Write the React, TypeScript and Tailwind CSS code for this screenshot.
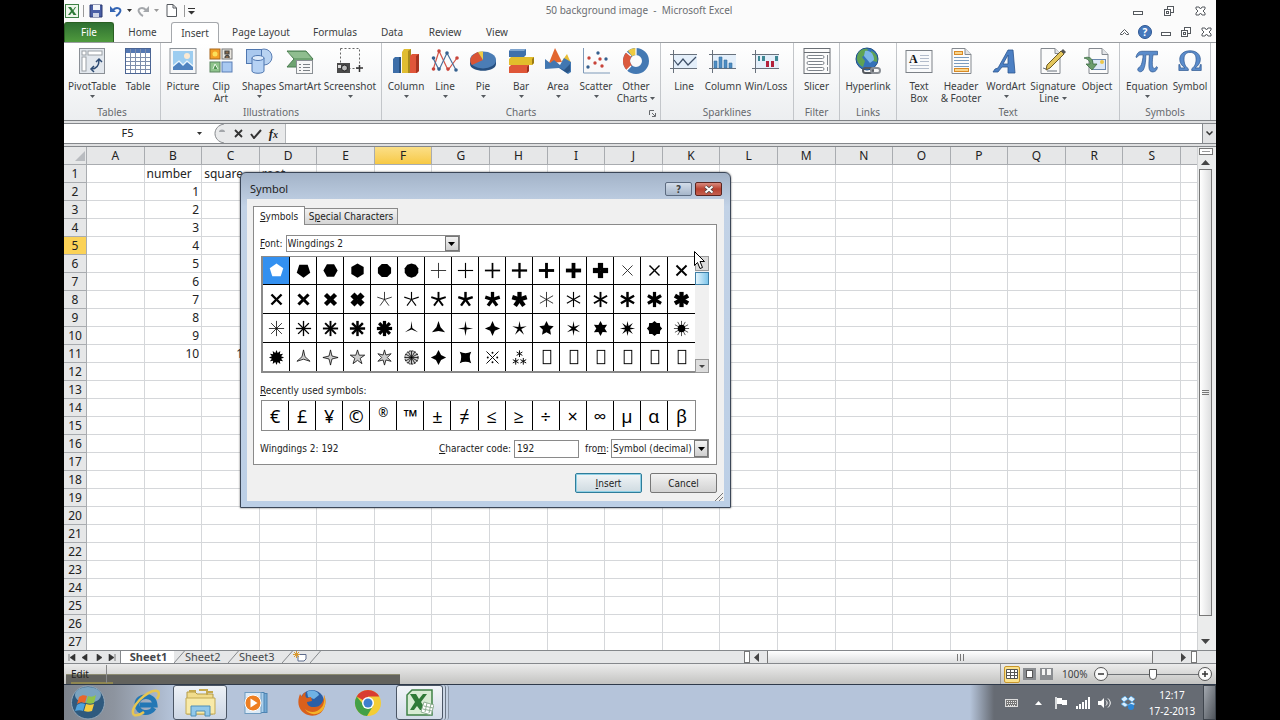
import React from 'react';

const uiFont = "font-['Noto_Sans','Open_Sans',sans-serif]";
const dialogFont = "font-['DejaVu_Sans_Condensed','Noto_Sans',sans-serif]";

/* ---------- ribbon icons, all on a 28x28 box ---------- */

const icons: Record<string, React.ReactNode> = {
  pivot: (
    <>
      <rect x="1.5" y="1.5" width="25" height="25" fill="#e3e8ee" stroke="#8b9096" />
      <rect x="4" y="4" width="4" height="4" fill="#fff" stroke="#9a9fa5" />
      <rect x="10" y="4" width="14" height="4" fill="#fff" stroke="#9a9fa5" />
      <rect x="4" y="10" width="4" height="14" fill="#fff" stroke="#9a9fa5" />
      <path d="M13 22c5 0 8-3 8-9M18 15l3-3 3 3M16 19l-3 3 3 3" fill="none" stroke="#2d4a73" strokeWidth="1.5" />
    </>
  ),
  table: (
    <>
      <rect x="1.5" y="1.5" width="25" height="25" fill="#fff" stroke="#4b6594" />
      <rect x="2" y="2" width="24" height="4" fill="#5478b4" />
      <path d="M2 10.500h24M2 14.500h24M2 18.500h24M2 22.500h24M6.500 2v24M11.500 2v24M16.500 2v24M21.500 2v24" stroke="#7e8eac" />
    </>
  ),
  picture: (
    <>
      <rect x="1" y="1.500" width="26" height="25" fill="#f6f7f8" stroke="#8b9198" />
      <rect x="4" y="4" width="20" height="19" fill="#9dcdf0" />
      <circle cx="18" cy="9" r="3" fill="#fbe9d2" />
      <path d="M4 20l6-5 4 4 4-4 6 5v3H4z" fill="#4f83c0" />
      <path d="M4 19l6-5 4 4 4-4 6 5" fill="none" stroke="#e9f4fc" strokeWidth="1.200" />
    </>
  ),
  clip: (
    <>
      <rect x="3" y="2" width="10" height="10" fill="#f3a026" stroke="#a5661e" />
      <circle cx="8" cy="7" r="2.500" fill="#fce05a" />
      <rect x="15" y="2" width="10" height="10" fill="#e9e6df" stroke="#777" />
      <path d="M18 11c0-4 5-3 4 0M18 4h4v3h-4z" stroke="#444" strokeWidth="1.200" fill="#8b6a4a" />
      <rect x="3" y="15" width="10" height="10" fill="#8fc48c" stroke="#5b8560" />
      <path d="M6 22l2-5 3 5" stroke="#e8f6e6" fill="#4d9351" />
      <rect x="15" y="15" width="10" height="10" fill="#a9c9f1" stroke="#5a7fb6" />
    </>
  ),
  shapes: (
    <>
      <circle cx="19" cy="10" r="8" fill="#b9d3f1" stroke="#5b7fb5" />
      <rect x="1.500" y="2.500" width="15" height="14" fill="#a9c8ee" stroke="#4f77b0" />
      <path d="M7 11v13c0 3 12 3 12 0V11z" fill="#b6d2f4" stroke="#4f77b0" />
      <ellipse cx="13" cy="11" rx="6" ry="2.500" fill="#deebfa" stroke="#4f77b0" />
    </>
  ),
  smartart: (
    <>
      <path d="M1 4h19l7 8-7 8H1l7-8z" fill="#6fa372" stroke="#4a7d50" />
      <path d="M2 5h18l5 6H8z" fill="#8fbd8f" />
      <rect x="10.500" y="13.500" width="16" height="13" fill="#f7f7f7" stroke="#8a8f94" />
      <path d="M13 17.500h2M17 17.500h7M13 20.500h2M17 20.500h7M13 23.500h2M17 23.500h7" stroke="#7c8186" />
    </>
  ),
  screenshot: (
    <>
      <rect x="4.500" y="1.500" width="19" height="20" fill="none" stroke="#666" strokeDasharray="2 2" />
      <rect x="1" y="16" width="13" height="10" fill="#4a4a4a" />
      <rect x="2" y="18" width="3" height="3" fill="#ddd" />
      <circle cx="8.500" cy="21" r="3" fill="#bbb" stroke="#222" />
      <path d="M20 21h7M23.500 18v7" stroke="#333" strokeWidth="1.500" />
    </>
  ),
  column: (
    <>
      <path d="M1 12l2-2h6v16H1z" fill="#3d6ea8" />
      <path d="M7 10l2 0v16H7z" fill="#27507f" />
      <path d="M10 5l2-3h7v24h-9z" fill="#e0bd31" />
      <path d="M16 4l3-2v24h-3z" fill="#a98a1c" />
      <path d="M18 9l2-2h7v17l-2 2h-7z" fill="#e0563a" />
      <path d="M24 9l3-2v17l-3 2z" fill="#a63420" />
    </>
  ),
  line: (
    <>
      <path d="M2 23l6-19 9 19 9-12" fill="none" stroke="#d4574a" strokeWidth="1.200" />
      <path d="M2 11l6 12 8-17 9 17" fill="none" stroke="#48709c" strokeWidth="1.200" />
      <g fill="#c8443a"><circle cx="2.500" cy="22" r="1.800" /><circle cx="8" cy="4" r="1.800" /><circle cx="17" cy="22" r="1.800" /><circle cx="26" cy="11" r="1.800" /></g>
      <g fill="#35608f"><circle cx="2.500" cy="11" r="1.800" /><circle cx="8" cy="22" r="1.800" /><circle cx="16" cy="6" r="1.800" /><circle cx="25" cy="23" r="1.800" /></g>
    </>
  ),
  pie: (
    <>
      <path d="M1 13v4c0 9 26 9 26 0v-4z" fill="#264f7f" />
      <ellipse cx="14" cy="13" rx="13" ry="8.500" fill="#4b7db5" />
      <path d="M14 13L3 18c-4-5-1-10 6-13z" fill="#d95435" />
      <path d="M14 13L9 5c2-.6 3-.6 5-.6z" fill="#efcb45" />
    </>
  ),
  bar: (
    <>
      <path d="M2 4l2-2h15v6l-2 2H2z" fill="#3f70aa" />
      <path d="M2 4l2-2h15l-2 2z" fill="#7ea5d0" />
      <path d="M2 12l2-2h23v6l-2 2H2z" fill="#e2bd2c" />
      <path d="M25 12l2-2v6l-2 2z" fill="#9c7c13" />
      <path d="M2 20l2-2h18v6l-2 2H2z" fill="#df5638" />
      <path d="M20 20l2-2v6l-2 2z" fill="#9e311f" />
    </>
  ),
  area: (
    <>
      <path d="M5 16l6-15 7 14z" fill="#e2662f" />
      <path d="M18 14l5-7 4 9z" fill="#e9bd35" />
      <path d="M1 12l5 4 4-3 6 5 4-7 7 4v10l-3 2-9-6-14 1z" fill="#4277b1" />
      <path d="M14 20l6 3 6-6v7l-3 2z" fill="#2a5587" />
    </>
  ),
  scatter: (
    <>
      <path d="M1.500 1v25H28" fill="none" stroke="#7f9ab9" />
      <g fill="#c8443a"><circle cx="7" cy="11" r="1.700" /><circle cx="13" cy="16" r="1.700" /><circle cx="18" cy="12" r="1.700" /><circle cx="20" cy="19" r="1.700" /></g>
      <g fill="#35608f"><circle cx="6" cy="20" r="1.700" /><circle cx="16" cy="6" r="1.700" /><circle cx="24" cy="12" r="1.700" /></g>
    </>
  ),
  other: (
    <>
      <circle cx="14" cy="14" r="9.500" fill="none" stroke="#4479b3" strokeWidth="7" />
      <path d="M7.300 20.700A9.500 9.500 0 0 1 7 7.500" fill="none" stroke="#dc5a3d" strokeWidth="7" />
      <path d="M8 6.500A9.500 9.500 0 0 1 14 4.500" fill="none" stroke="#edca41" strokeWidth="7" />
      <path d="M14 0v8M3 4l6 5M4 24l5-5" stroke="#fff" strokeWidth="1.200" />
    </>
  ),
  sparkLine: (
    <>
      <rect x="3" y="7" width="24" height="14" fill="#e4effa" />
      <path d="M0 7.500h27M0 21.500h27M3.500 3v23" stroke="#68717c" />
      <path d="M4 13l4 5 5-6 5 6 8-8" fill="none" stroke="#3f5068" strokeWidth="1.200" />
    </>
  ),
  sparkColumn: (
    <>
      <rect x="3" y="7" width="24" height="14" fill="#e4effa" />
      <path d="M0 7.500h27M0 21.500h27M3.500 3v23" stroke="#68717c" />
      <path d="M5 14h3v7H5zM10 10h3v11h-3zM15 13h3v8h-3zM20 16h3v5h-3z" fill="#4d8dc4" stroke="#35719f" strokeWidth=".6" />
    </>
  ),
  winLoss: (
    <>
      <rect x="3" y="7" width="24" height="14" fill="#e4effa" />
      <path d="M0 7.500h27M0 21.500h27M3.500 3v23" stroke="#68717c" />
      <path d="M6 9h2v5H6zM10 9h3v5h-3zM23 9h3v5h-3z" fill="#3f8894" />
      <path d="M14 14h3v6h-3zM19 14h3v6h-3z" fill="#b3213b" />
    </>
  ),
  slicer: (
    <>
      <rect x="1" y="1.500" width="26" height="25" fill="#fbfbfb" stroke="#6a6f75" />
      <path d="M1 5.500h26" stroke="#6a6f75" />
      <g fill="#fff" stroke="#7e848b"><rect x="4" y="8.500" width="17" height="3" rx="1.500" /><rect x="4" y="14.500" width="17" height="3" rx="1.500" /><rect x="4" y="20.500" width="17" height="3" rx="1.500" /></g>
      <path d="M24.500 8v16" stroke="#7e848b" strokeDasharray="10 2" />
    </>
  ),
  hyperlink: (
    <>
      <circle cx="13" cy="12" r="11" fill="#3472b9" stroke="#1f4f83" />
      <path d="M5 5c4-4 8-4 9-2l-3 5-3 2 3 4-2 6c-6-3-8-9-4-15zM17 4c5 2 7 6 6 11l-4-1-3-4z" fill="#5fa353" />
      <path d="M11 4c5-1 9 3 9 9l-4 3-6-7z" fill="#7cb7e6" />
      <rect x="9" y="21" width="10" height="5" rx="2.500" fill="none" stroke="#55595f" strokeWidth="2" />
      <rect x="17" y="21" width="9" height="5" rx="2.500" fill="none" stroke="#898e94" strokeWidth="2" />
    </>
  ),
  textBox: (
    <>
      <rect x="1" y="3.500" width="26" height="22" fill="#f9fafb" stroke="#7c8187" />
      <path d="M15 8.500h9M15 11.500h9M15 14.500h9M5 18.500h19M5 21.500h19" stroke="#b3bccb" />
      <text x="4" y="16" fontSize="12" fontWeight="bold" fontFamily="Liberation Serif, serif" fill="#111">A</text>
    </>
  ),
  header: (
    <>
      <path d="M5 1.500h13l6 6v19H5z" fill="#fcfcfc" stroke="#84898f" />
      <path d="M18 1.500v6h6" fill="#e2e4e7" stroke="#84898f" />
      <rect x="7.500" y="4.500" width="8" height="3" fill="#f8d48b" stroke="#d98a25" />
      <rect x="7.500" y="21.500" width="14" height="3" fill="#f8d48b" stroke="#d98a25" />
      <path d="M7 10.500h15M7 13.500h15M7 16.500h15M7 19.500h15" stroke="#7b9cbf" />
    </>
  ),
  wordArt: <path d="M16 3h5l2 23h-7v-6h-6l-4 5H1l2-3 3-1zM16 8l-5 9h5z" fill="#4c80c4" stroke="#2c568f" strokeWidth=".8" fillRule="evenodd" />,
  signature: (
    <>
      <path d="M2 1.500h14l5 5v20H2z" fill="#fbfbfb" stroke="#84898f" />
      <path d="M16 1.500v5h5" fill="#e2e4e7" stroke="#84898f" />
      <path d="M8 18L22 4l3 3-14 14-4 2z" fill="#e4c65d" stroke="#6c5a25" />
      <path d="M22 4l2-2 3 3-2 2z" fill="#555" />
      <path d="M4 21l3 1M8 24h10" stroke="#67707b" />
    </>
  ),
  object: (
    <>
      <path d="M6 1.500h13l6 6v19H6z" fill="#fbfbfb" stroke="#84898f" />
      <path d="M19 1.500v6h6" fill="#e2e4e7" stroke="#84898f" />
      <rect x="9.500" y="12.500" width="13" height="10" fill="#dce8f7" stroke="#6b88ae" />
      <circle cx="19" cy="15" r="2" fill="#ecc74b" />
      <path d="M1 11c5-2 9 0 9 6h4l-5 6-6-6h4c0-3-2-5-6-6z" fill="#6b9c6e" stroke="#3f7046" strokeWidth=".8" />
    </>
  ),
  equation: (
    <g transform="translate(2 2) scale(.9)">
      <path d="M1 9C3 3 5 2.500 9 2.500h16v4h-5c-1 7-1 12 0 14 1 2 3 1 4-1l1 1c-1 4-3 5-6 5-4-1-4-4-3-19h-4c0 8-1 14-3 17-2 3-6 2-6-1 1-3 3-2 4-5 1-3 2-7 2-11-4 0-5 0-7 3z" fill="#5b8ccb" stroke="#2c568f" strokeWidth=".8" />
    </g>
  ),
  omega: (
    <g transform="translate(2 2) scale(.86)">
      <path d="M2 18l1 4h5C4 19 2 16 2 12 2 6 7 2 14 2s12 4 12 10c0 4-2 7-6 10h5l1-4h1v7H16v-2c4-3 5-7 5-11 0-5-2-8-7-8s-7 3-7 8c0 4 1 8 5 11v2H1v-7z" fill="#5b8ccb" stroke="#2c568f" strokeWidth=".8" />
    </g>
  ),
};

interface RibbonItem {
  label: string;
  second?: string;
  icon: string;
  width: string;
  arrow?: boolean;
}

const ribbon: { name: string; launcher?: boolean; items: RibbonItem[] }[] = [
  {
    name: 'Tables',
    items: [
      { label: 'PivotTable', icon: 'pivot', width: 'w-[52px]', arrow: true },
      { label: 'Table', icon: 'table', width: 'w-[40px]' },
    ],
  },
  {
    name: 'Illustrations',
    items: [
      { label: 'Picture', icon: 'picture', width: 'w-[40px]' },
      { label: 'Clip', second: 'Art', icon: 'clip', width: 'w-[36px]' },
      { label: 'Shapes', icon: 'shapes', width: 'w-[40px]', arrow: true },
      { label: 'SmartArt', icon: 'smartart', width: 'w-[42px]' },
      { label: 'Screenshot', icon: 'screenshot', width: 'w-[58px]', arrow: true },
    ],
  },
  {
    name: 'Charts',
    launcher: true,
    items: [
      { label: 'Column', icon: 'column', width: 'w-[44px]', arrow: true },
      { label: 'Line', icon: 'line', width: 'w-[34px]', arrow: true },
      { label: 'Pie', icon: 'pie', width: 'w-[42px]', arrow: true },
      { label: 'Bar', icon: 'bar', width: 'w-[34px]', arrow: true },
      { label: 'Area', icon: 'area', width: 'w-[40px]', arrow: true },
      { label: 'Scatter', icon: 'scatter', width: 'w-[36px]', arrow: true },
      { label: 'Other', second: 'Charts', icon: 'other', width: 'w-[44px]', arrow: true },
    ],
  },
  {
    name: 'Sparklines',
    items: [
      { label: 'Line', icon: 'sparkLine', width: 'w-[42px]' },
      { label: 'Column', icon: 'sparkColumn', width: 'w-[36px]' },
      { label: 'Win/Loss', icon: 'winLoss', width: 'w-[50px]' },
    ],
  },
  { name: 'Filter', items: [{ label: 'Slicer', icon: 'slicer', width: 'w-[41px]' }] },
  { name: 'Links', items: [{ label: 'Hyperlink', icon: 'hyperlink', width: 'w-[52px]' }] },
  {
    name: 'Text',
    items: [
      { label: 'Text', second: 'Box', icon: 'textBox', width: 'w-[40px]' },
      { label: 'Header', second: '& Footer', icon: 'header', width: 'w-[44px]' },
      { label: 'WordArt', icon: 'wordArt', width: 'w-[46px]', arrow: true },
      { label: 'Signature', second: 'Line', icon: 'signature', width: 'w-[48px]', arrow: true },
      { label: 'Object', icon: 'object', width: 'w-[40px]' },
    ],
  },
  {
    name: 'Symbols',
    items: [
      { label: 'Equation', icon: 'equation', width: 'w-[50px]', arrow: true },
      { label: 'Symbol', icon: 'omega', width: 'w-[36px]' },
    ],
  },
];

const tabs = [
  { name: 'Home', width: 'w-[57px]' },
  { name: 'Insert', width: 'w-[48px]' },
  { name: 'Page Layout', width: 'w-[84px]' },
  { name: 'Formulas', width: 'w-[64px]' },
  { name: 'Data', width: 'w-[50px]' },
  { name: 'Review', width: 'w-[56px]' },
  { name: 'View', width: 'w-[48px]' },
];

const Arrow = ({ className = '' }: { className?: string }) => (
  <svg width="5" height="3" viewBox="0 0 5 3" className={className}>
    <path d="M0 0h5L2.500 3z" fill="currentColor" />
  </svg>
);

/* minimise / restore / close, used by both the window and the workbook */
const WindowButtons = ({ className }: { className: string }) => (
  <div className={`flex items-center text-[#55595e] ${className}`}>
    <button aria-label="Minimize">
      <svg width="10" height="12" viewBox="0 0 10 12"><rect x=".5" y="6.500" width="9" height="3" fill="#fff" stroke="currentColor" /></svg>
    </button>
    <button aria-label="Restore">
      <svg width="12" height="12" viewBox="0 0 12 12" fill="#fff" stroke="currentColor">
        <rect x="4.500" y="1.500" width="6" height="6" />
        <rect x="1.500" y="4.500" width="6" height="6" />
        <rect x="3.500" y="6.500" width="2" height="2" />
      </svg>
    </button>
    <button aria-label="Close">
      <svg width="11" height="12" viewBox="0 0 11 12">
        <path d="M1 2h3l1.500 2L7 2h3v2L8 6l2 2v2H7L5.500 8 4 10H1V8l2-2-2-2z" fill="#fff" stroke="currentColor" />
      </svg>
    </button>
  </div>
);

const TitleBar = () => (
  <div className="flex h-[22px] shrink-0 items-center justify-between bg-[#fbfbfb] pr-[10px] pb-px">
    <div className="flex flex-1 items-center gap-[5px] text-[#333]">
      <svg width="16" height="16" viewBox="0 0 16 16">
        <rect x="1.500" y="1.500" width="13" height="13" fill="#eef7ec" stroke="#3d8145" />
        <path d="M4 4h3l2 3 2-3h1l-2.500 4 3 4h-3L8 9.500 6 12H4l3-4z" fill="#2d7a37" />
      </svg>
      <span className="-ml-[2px] h-3 w-px bg-[#999]" />
      <button aria-label="Save">
        <svg width="14" height="14" viewBox="0 0 14 14"><path d="M1 1h12v12H1z" fill="#4a5fa5" stroke="#2d3a70" /><path d="M4 1h7v5H4z" fill="#f3f5fa" /><path d="M4 9h6v4H4z" fill="#cfd5e6" /></svg>
      </button>
      <button aria-label="Undo" className="ml-[2px] flex items-center gap-[5px]">
        <svg width="12" height="12" viewBox="0 0 12 12"><path d="M3 5c4-4 9-1 7 2-1 2-2 3-4 4" fill="none" stroke="#3465b4" strokeWidth="2" /><path d="M0 1v6h6z" fill="#3465b4" /></svg>
        <Arrow />
      </button>
      <button aria-label="Redo" className="flex items-center gap-[5px] text-[#999]">
        <svg width="12" height="12" viewBox="0 0 12 12"><path d="M9 5C5 1 0 4 2 7c1 2 2 3 4 4" fill="none" stroke="#a4a7ab" strokeWidth="2" /><path d="M12 1v6H6z" fill="#a4a7ab" /></svg>
        <Arrow />
      </button>
      <button aria-label="New" className="ml-[2px]">
        <svg width="11" height="13" viewBox="0 0 11 13"><path d="M1 .500h6l3.500 3.500v8.500H1zM7 .500V4h3.500" fill="#fff" stroke="#55595e" /></svg>
      </button>
      <span className="ml-[2px] h-3 w-px bg-[#999]" />
      <button aria-label="Customize toolbar" className="-ml-[2px]">
        <svg width="7" height="8" viewBox="0 0 7 8"><path d="M0 1.500h7" stroke="#333" /><path d="M0 4h7L3.500 7.500z" fill="#333" /></svg>
      </button>
    </div>
    <h1 className="pl-[8px] text-[10px] text-[#6b6e72]">50 background image&nbsp; -&nbsp; Microsoft Excel</h1>
    <div className="flex flex-1 justify-end">
      <WindowButtons className="gap-[20px]" />
    </div>
  </div>
);

const TabBar = () => (
  <div className="flex h-[21px] shrink-0 items-stretch justify-between border-b border-[#9a9da1] bg-[#fbfbfb] pr-[4px]">
    <div className="flex text-[10px] text-[#3b3e42]">
      <button className="w-[50px] rounded-t-[3px] border border-b-0 border-[#2a5f22] bg-linear-to-b from-[#2f7032] to-[#4f9a3d] text-white">File</button>
      {tabs.map((t) => (
        <button
          key={t.name}
          className={`${t.width} ${t.name === 'Insert' ? '-mb-px rounded-t-[3px] border border-b-0 border-[#a5a8ac] bg-white' : ''}`}
        >
          {t.name}
        </button>
      ))}
    </div>
    <div className="flex items-center gap-[9px]">
      <button aria-label="Collapse ribbon">
        <svg width="9" height="7" viewBox="0 0 9 7"><path d="M.500 5.500v-1l4-4 4 4v1h-2l-2-2-2 2z" fill="#fff" stroke="#55595e" /></svg>
      </button>
      <button aria-label="Help">
        <svg width="14" height="14" viewBox="0 0 14 14">
          <circle cx="7" cy="7" r="6.500" fill="#4678bb" stroke="#2e5793" />
          <text x="7" y="10.500" textAnchor="middle" fontSize="10" fontWeight="bold" fill="#fff">?</text>
        </svg>
      </button>
      <WindowButtons className="gap-[9px]" />
    </div>
  </div>
);

const Ribbon = () => (
  <div className="flex h-[78px] shrink-0 border-b border-[#7f8285] bg-linear-to-b from-white to-[#eceef0]">
    {ribbon.map((g) => (
      <section key={g.name} className="relative flex flex-col justify-between border-r border-[#c3c6ca] px-[2px] pb-px">
        <div className="flex items-start">
          {g.items.map((it) => (
            <button key={it.label} className={`flex flex-col items-center pt-[4px] text-[10px] leading-[12px] whitespace-nowrap text-[#3b3e42] ${it.width}`}>
              <svg width="28" height="28" viewBox="0 0 28 28" className="mb-[5px]">{icons[it.icon]}</svg>
              <span>{it.label}</span>
              {it.second ? (
                <span className="flex items-center gap-[3px]">
                  {it.second}
                  {it.arrow && <Arrow className="text-[#55595e]" />}
                </span>
              ) : (
                it.arrow && <Arrow className="mt-[3px] text-[#55595e]" />
              )}
            </button>
          ))}
        </div>
        <h2 className="text-center text-[10px] leading-[13px] text-[#66696d]">{g.name}</h2>
        {g.launcher && (
          <button aria-label="Chart options" className="absolute right-[4px] bottom-[3px]">
            <svg width="7" height="7" viewBox="0 0 7 7"><path d="M.500 5V.500H5M3 3l3 3M6.500 3v3.500H3" fill="none" stroke="#66696d" /></svg>
          </button>
        )}
      </section>
    ))}
  </div>
);

const FormulaBar = () => (
  <div className="my-[2px] flex h-[21px] shrink-0 border-y border-[#85888c] bg-white">
    <div className="flex w-[141px] items-center pr-[3px]">
      <input aria-label="Name box" defaultValue="F5" className="min-w-0 flex-1 pr-[6px] text-center text-[11px] text-[#222] outline-none" />
      <Arrow className="text-[#333]" />
    </div>
    <div className="flex w-[80px] items-center justify-end gap-[7px] bg-[#e9eaeb] pr-[7px]">
      <div className="flex flex-1 bg-white">
        <svg width="17" height="19" viewBox="0 0 17 19" className="ml-auto">
          <path d="M17 0h-3C2 2 2 17 14 19h3z" fill="#e9eaeb" />
          <path d="M14 0C2 2 2 17 14 19" fill="none" stroke="#85888c" />
          <path d="M9 8a3 2.500 0 0 1 6 0z" fill="#a4a7ab" />
        </svg>
      </div>
      <button aria-label="Cancel entry">
        <svg width="9" height="9" viewBox="0 0 9 9"><path d="M1 1l7 7M8 1L1 8" stroke="#333" strokeWidth="1.800" /></svg>
      </button>
      <button aria-label="Enter">
        <svg width="12" height="10" viewBox="0 0 12 10"><path d="M1 5l3 4 7-8" fill="none" stroke="#333" strokeWidth="2" /></svg>
      </button>
      <button aria-label="Insert function" className="font-['Liberation_Serif',serif] text-[13px] leading-none font-bold text-[#222] italic">
        f<span className="text-[10px]">x</span>
      </button>
    </div>
    <input aria-label="Formula" className="min-w-0 flex-1 border-l border-[#b5b8bb] outline-none" />
    <button aria-label="Expand formula bar" className="flex w-[14px] items-center justify-center border-l border-[#85888c] bg-[#e3e4e5]">
      <svg width="7" height="5" viewBox="0 0 7 5"><path d="M.500.500l3 3 3-3" fill="none" stroke="#333" strokeWidth="1.500" /></svg>
    </button>
  </div>
);

const columns = 'ABCDEFGHIJKLMNOPQRS'.split('');
const rows = Array.from({ length: 27 }, (_, i) => i + 1);

const cells: Record<string, string> = { B1: 'number', C1: 'square', D1: 'root', C11: '100' };
for (let n = 1; n <= 10; n++) cells[`B${n + 1}`] = String(n);

const Sheet = () => (
  <div className="flex min-h-0 flex-1 overflow-hidden border-t border-[#85888c]">
    <div className="min-w-0 flex-1 overflow-hidden bg-white">
      <table className="w-full table-fixed border-separate border-spacing-0 text-[12px] leading-[16px] text-[#222]">
        <colgroup>
          <col className="w-[23px]" />
          {columns.map((c) => <col key={c} />)}
          <col className="w-[16px]" />
        </colgroup>
        <thead>
          <tr className="h-[18px] bg-[#e6e7e8]">
            <th className="border-r border-b border-[#a9acb0] p-0">
              <svg width="11" height="11" viewBox="0 0 11 11" className="mt-px ml-auto"><path d="M10 0v10H0z" fill="#b9bcc0" /></svg>
            </th>
            {columns.map((c) => (
              <th key={c} className={`border-r border-b border-[#a9acb0] p-0 font-normal ${c === 'F' ? 'bg-linear-to-b from-[#fbdf86] to-[#f7c942]' : ''}`}>{c}</th>
            ))}
            <th className="border-b border-[#a9acb0] p-0" />
          </tr>
        </thead>
        <tbody>
          {rows.map((r) => (
            <tr key={r} className="h-[18px]">
              <th className={`border-r border-b border-[#a9acb0] p-0 text-center font-normal ${r === 5 ? 'bg-[#fbd257]' : 'bg-[#e6e7e8]'}`}>{r}</th>
              {columns.map((c) => {
                const v = cells[c + r];
                return (
                  <td key={c} className={`border-r border-b border-[#d5d7da] px-[2px] py-0 ${r > 1 ? 'text-right' : 'text-left'}`}>
                    {v}
                  </td>
                );
              })}
              <td className="border-b border-[#d5d7da] p-0" />
            </tr>
          ))}
        </tbody>
      </table>
    </div>
    <div className="flex w-[19px] flex-col items-center border-l border-[#d0d2d4] bg-[#ebecec] pr-[3px] text-[#444]">
      <div className="mt-px flex h-[7px] w-[14px] items-center justify-center border border-[#777] bg-white"><span className="h-px w-2 bg-[#999]" /></div>
      <button aria-label="Scroll up" className="flex h-[14px] items-center"><svg width="9" height="5" viewBox="0 0 9 5"><path d="M0 5h9L4.500 0z" fill="currentColor" /></svg></button>
      <div className="mb-[17px] flex w-[13px] flex-1 flex-col items-center justify-center gap-px border border-[#777] bg-linear-to-r from-white to-[#dddedf]">
        <span className="h-px w-[7px] bg-[#777]" />
        <span className="h-px w-[7px] bg-[#777]" />
        <span className="h-px w-[7px] bg-[#777]" />
      </div>
      <button aria-label="Scroll down" className="flex h-[17px] w-full items-center justify-center"><svg width="9" height="5" viewBox="0 0 9 5"><path d="M0 0h9L4.500 5z" fill="currentColor" /></svg></button>
    </div>
  </div>
);

const Slash = () => (
  <svg width="11" height="12" viewBox="0 0 11 12" className="shrink-0"><path d="M0 12L10.500 0" fill="none" stroke="#85888c" /></svg>
);

const SheetTabs = () => (
  <div className="flex h-[14px] shrink-0 border-y border-[#85888c] bg-[#e6e7e8] text-[11px] leading-[12px] text-[#44474b]">
    <div className="flex w-[57px] items-center justify-around border-r border-[#85888c] px-px">
      {['M1 0v7M7 0v7L2 3.500z', 'M6 0v7L1 3.500z', 'M2 0v7l5-3.500z', 'M7 0v7M1 0v7l5-3.500z'].map((d, i) => (
        <button key={d} aria-label={['First sheet', 'Previous sheet', 'Next sheet', 'Last sheet'][i]}>
          <svg width="8" height="7" viewBox="0 0 8 7"><path d={d} fill="#333" stroke="#333" strokeWidth=".6" /></svg>
        </button>
      ))}
    </div>
    <button className="w-[53px] bg-white pl-[2px] font-bold">Sheet1</button>
    <Slash />
    <button className="w-[43px] text-left">Sheet2</button>
    <Slash />
    <button className="w-[43px] text-left">Sheet3</button>
    <Slash />
    <button aria-label="Insert sheet" className="w-[17px]">
      <svg width="14" height="12" viewBox="0 0 14 12"><path d="M5 4.500V10h6l2-2V3.500H7" fill="#fff" stroke="#5e6c8c" /><path d="M3.500 0v7M0 3.500h7M1 1l5 5M6 1L1 6" stroke="#d9992f" /></svg>
    </button>
    <Slash />
    <div className="min-w-0 flex-1" />
    <div className="flex w-2/5 max-w-[453px] shrink-0 items-stretch">
      <span className="w-[6px] border border-[#777] bg-white" />
      <button aria-label="Scroll left" className="w-[17px] pl-[4px]"><svg width="5" height="9" viewBox="0 0 5 9"><path d="M5 0v9L0 4.500z" fill="#444" /></svg></button>
      <div className="flex min-w-0 flex-1 items-center justify-center gap-[2px] border-x border-[#777] bg-linear-to-b from-white to-[#dddedf]">
        <span className="h-[7px] w-px bg-[#777]" />
        <span className="h-[7px] w-px bg-[#777]" />
        <span className="h-[7px] w-px bg-[#777]" />
      </div>
      <button aria-label="Scroll right" className="w-[38px] pl-[28px]"><svg width="5" height="9" viewBox="0 0 5 9"><path d="M0 0v9l5-4.500z" fill="#444" /></svg></button>
      <span className="w-[6px] border border-[#777] bg-white" />
    </div>
    <div className="w-[19px]" />
  </div>
);

const StatusBar = () => (
  <div className="relative flex h-[20px] shrink-0 items-center justify-between bg-linear-to-b from-[#ececec] to-[#c3c3c1] pr-[4px] text-[10px] text-[#3b3e42]">
    {/* fading window preview above the taskbar */}
    <div className="absolute bottom-0 left-[2px] h-[10px] w-[334px] border-t border-[#8b8a70] bg-[#62625d]">
      <div className="absolute bottom-0 left-[5px] h-[2px] w-[42px] bg-[#8f8650]" />
    </div>
    <span className="relative w-[43px] border-r border-[#888] pl-[7px] leading-[18px] text-[#222]">Edit</span>
    <div className="flex h-full items-center border-l border-[#999] pl-[3px]">
      <button aria-label="Normal view" className="flex h-[17px] w-[16px] items-center justify-center rounded-[2px] border border-[#c9972b] bg-[#fbe28c]">
        <svg width="12" height="10" viewBox="0 0 12 10"><path d="M.500.500h11v9H.500zM.500 3.500h11M.500 6.500h11M4.500.500v9M8.500.500v9" fill="#fff" stroke="#555" /></svg>
      </button>
      <button aria-label="Page layout view" className="ml-[3px]">
        <svg width="13" height="12" viewBox="0 0 13 12"><rect width="13" height="12" fill="#8a8d91" /><rect x="3.500" y="2.500" width="6" height="7" fill="#fff" stroke="#555" /></svg>
      </button>
      <button aria-label="Page break view" className="ml-[4px]">
        <svg width="13" height="12" viewBox="0 0 13 12"><rect width="13" height="12" fill="#8a8d91" /><path d="M2 1h3v6H2zM7 1h4v6H7z" fill="#f3f3f3" /></svg>
      </button>
      <span className="ml-[9px] w-[32px]">100%</span>
      <button aria-label="Zoom out">
        <svg width="14" height="14" viewBox="0 0 14 14"><circle cx="7" cy="7" r="6.500" fill="#fafafa" stroke="#555" /><path d="M4 7h6" stroke="#333" strokeWidth="1.500" /></svg>
      </button>
      <input
        type="range"
        aria-label="Zoom"
        defaultValue={50}
        className="h-[14px] w-[90px] appearance-none bg-[linear-gradient(#6f7276,#6f7276)] bg-[length:100%_1px] bg-center bg-no-repeat [&::-webkit-slider-thumb]:h-[11px] [&::-webkit-slider-thumb]:w-[8px] [&::-webkit-slider-thumb]:appearance-none [&::-webkit-slider-thumb]:rounded-b-[4px] [&::-webkit-slider-thumb]:border [&::-webkit-slider-thumb]:border-[#555] [&::-webkit-slider-thumb]:bg-white"
      />
      <button aria-label="Zoom in">
        <svg width="14" height="14" viewBox="0 0 14 14"><circle cx="7" cy="7" r="6.500" fill="#fafafa" stroke="#555" /><path d="M4 7h6M7 4v6" stroke="#333" strokeWidth="1.500" /></svg>
      </button>
    </div>
  </div>
);

const Taskbar = () => (
  <div className="flex h-[36px] shrink-0 items-center border-t border-[#2f3a4a] bg-[linear-gradient(to_right,#7d838c_0,#8d949f_50px,#b5c4da_110px,#b5c4da_calc(100%-246px),#666b73_calc(100%-222px),#666b73_100%)] text-white">
    <button aria-label="Start" className="ml-[6px]">
      <svg width="36" height="35" viewBox="0 0 36 35">
        <circle cx="18" cy="17.500" r="16.500" fill="#2f5a7e" stroke="#94a7b8" />
        <ellipse cx="18" cy="10" rx="13" ry="8" fill="#7ba3bf" />
        <path d="M9 12c3-2 5-2 8-1l-2 7c-2-1-5-1-8 1z" fill="#e8662c" />
        <path d="M18 11c3 1 5 1 8-1l-2 8c-3 1-5 1-8 0z" fill="#8fc34a" />
        <path d="M7 20c3-2 5-2 8-1l-2 7c-2-1-5-1-8 0z" fill="#4fa3dd" />
        <path d="M16 19c3 1 5 1 8 0l-2 7c-3 1-5 1-8 0z" fill="#f8cd3e" />
      </svg>
    </button>
    <button aria-label="Internet Explorer" className="ml-[24px]">
      <svg width="30" height="30" viewBox="0 0 30 30">
        <path d="M24 20c-4 7-17 6-17-4 0-9 17-11 18 1H10" fill="none" stroke="#2377b5" strokeWidth="5" />
        <path d="M4 27C-2 21 17 1 27 3c3 1 2 5 0 8M4 27c3 1 6 0 10-3" fill="none" stroke="#e6c552" strokeWidth="2.500" />
      </svg>
    </button>
    <button aria-label="Windows Explorer" className="ml-[13px] flex h-[35px] w-[54px] items-center justify-center rounded-[3px] border border-[#4b5665] bg-linear-to-b from-[#eef2f7] to-[#ccd6e4]">
      <svg width="31" height="28" viewBox="0 0 31 28">
        <path d="M2 3h8l2 2h16v20H2z" fill="#f1dc8c" stroke="#b39b49" />
        <path d="M4 2h7M14 1h8v5M22 3h6" stroke="#c5a94e" strokeWidth="2" fill="none" />
        <path d="M1 9h29v16H1z" fill="#f8eaa9" stroke="#c2a954" />
        <path d="M6 27V17h19v10h-5v-5h-9v5z" fill="#91c8ea" stroke="#4e8eb8" />
      </svg>
    </button>
    <button aria-label="Media Player" className="ml-[16px]">
      <svg width="26" height="24" viewBox="0 0 26 24">
        <rect x="9" y="2.500" width="15" height="19" fill="#73a9d4" stroke="#4e84b2" />
        <rect x="6" y="1.500" width="15" height="20" fill="#a9cfec" stroke="#4e84b2" />
        <rect x="2" y="1.500" width="16" height="21" fill="#dceaf6" stroke="#6f9bc0" />
        <circle cx="10" cy="12" r="8" fill="#ee7f22" stroke="#fff" />
        <path d="M7.500 7.500v9l7-4.500z" fill="#fff" />
      </svg>
    </button>
    <button aria-label="Firefox" className="ml-[28px]">
      <svg width="30" height="30" viewBox="0 0 30 30">
        <circle cx="15" cy="14" r="12" fill="#2b5fa6" />
        <path d="M10 4c4-3 11-1 12 3l-5 4-6-2z" fill="#6fb2e4" />
        <path d="M3 6c-3 7-2 15 4 19 7 5 17 3 20-5 2-4 2-9 0-13 0 7-4 13-11 12-3 0-6-2-6-5l5-1-1-4-4 1c-2-1-2-4-1-6-3 1-4 3-4 5z" fill="#d9601c" />
        <path d="M27 7c1 8-1 13-7 16-4 2-9 1-12-2 4 7 15 7 19-1 2-4 2-9 0-13z" fill="#f4b429" />
      </svg>
    </button>
    <button aria-label="Chrome" className="ml-[27px]">
      <svg width="28" height="28" viewBox="0 0 28 28">
        <circle cx="14" cy="14" r="13" fill="#f3cd35" />
        <path d="M14 14L2.700 7.500A13 13 0 0 1 25.300 7.500H14z" fill="#d93d31" />
        <path d="M14 14l-6 0L2.700 7.500A13 13 0 0 0 13 27l6-10z" fill="#43a047" />
        <circle cx="14" cy="14" r="6" fill="#fff" />
        <circle cx="14" cy="14" r="4.500" fill="#3d7fce" />
      </svg>
    </button>
    <button aria-label="Excel" className="ml-[14px] flex h-[35px] w-[47px] items-center justify-center rounded-[3px] border border-[#4b5665] bg-linear-to-b from-[#f2f5f9] to-[#d3dce8]">
      <svg width="28" height="28" viewBox="0 0 28 28">
        <path d="M6 1h20v25H1V6z" fill="#d8ecd4" stroke="#3f8146" strokeWidth="1.500" />
        <path d="M4 5h6l3 5 4-5h4l-6 8 5 8h-6l-3-4-3 4H4l5-8z" fill="#2f7a37" />
        <path d="M18 13l10 3-3 10-10-3z" fill="#fff" stroke="#8fae92" />
        <path d="M18 17l9 2M17 20l9 2M21 14l-2 9M25 15l-2 9" stroke="#8fae92" />
      </svg>
    </button>
    <span className="h-[35px] w-[3px] rounded-r-[3px] border-r border-[#6b7685] bg-[#cbd6e5]" />
    <span className="h-[35px] w-[3px] rounded-r-[3px] border-r border-[#8b97a8] bg-[#c3d0e2]" />
    <div className="flex-1" />
    <div className="flex items-center">
      <svg width="13" height="8" viewBox="0 0 13 8"><rect x=".500" y=".500" width="12" height="7" fill="#777" stroke="#ddd" /><path d="M2 2.500h9M2 4.500h9M3 6.500h7" stroke="#eee" strokeDasharray="1 1" /></svg>
      <svg width="7" height="4" viewBox="0 0 7 4" className="ml-[17px]"><path d="M0 4h7L3.500 0z" fill="#fff" /></svg>
      <svg width="14" height="14" viewBox="0 0 14 14" className="ml-[12px]"><path d="M2 1v12" stroke="#fff" strokeWidth="1.500" /><path d="M3 2h5v2h5v5H8V8H3z" fill="#fff" /></svg>
      <svg width="14" height="12" viewBox="0 0 14 12" className="ml-[8px]"><path d="M0 9h2v3H0zM3 7h2v5H3zM6 5h2v7H6zM9 3h2v9H9zM12 0h2v12h-2z" fill="#fff" /></svg>
      <svg width="13" height="12" viewBox="0 0 13 12" className="ml-[8px]"><path d="M0 4h3l3-3v10L3 8H0z" fill="#fff" /><path d="M8 3.500c1.500 1.500 1.500 3.500 0 5M10 1.500c3 3 3 6 0 9" fill="none" stroke="#fff" /></svg>
      <svg width="14" height="14" viewBox="0 0 14 14" className="ml-[10px]"><path d="M4 0l3 3-4 3-3-3zM10 0l4 3-3 3-4-3zM0 8l3-2 4 3-3 2zM14 8l-3-2-4 3 3 2z" fill="#d9efff" stroke="#3d9be0" strokeWidth=".6" /><circle cx="10" cy="11" r="3" fill="#2c86d6" /></svg>
      <div className="ml-[12px] w-[50px] text-center text-[10px] leading-[16px]">
        <div>12:17</div>
        <div>17-2-2013</div>
      </div>
      <button aria-label="Show desktop" className="ml-[6px] h-[35px] w-[13px] border border-[#3f454d] bg-linear-to-br from-[#a4a9b0] to-[#50555c]" />
    </div>
  </div>
);

/* ---------- symbol glyphs ---------- */

const point = (r: number, a: number) => `${(r * Math.sin(a)).toFixed(2)},${(-r * Math.cos(a)).toFixed(2)}`;

const Poly = ({ n, turn = 0, r = 7.5 }: { n: number; turn?: number; r?: number }) => (
  <polygon points={Array.from({ length: n }, (_, i) => point(r, ((i + turn) * 2 * Math.PI) / n)).join(' ')} />
);

const Star = ({ n, inner, r = 8, open }: { n: number; inner: number; r?: number; open?: boolean }) => (
  <polygon
    points={Array.from({ length: n * 2 }, (_, i) => point(i % 2 ? inner : r, (i * Math.PI) / n)).join(' ')}
    fill={open ? '#ccc' : 'currentColor'}
    stroke={open ? 'currentColor' : 'none'}
    strokeWidth=".8"
  />
);

const Spokes = ({ n, w, turn = 0, r = 8 }: { n: number; w: number; turn?: number; r?: number }) => (
  <g stroke="currentColor" strokeWidth={w}>
    {Array.from({ length: n }, (_, i) => {
      const a = ((i + turn) * 2 * Math.PI) / n;
      return <line key={i} x1="0" y1="0" x2={(r * Math.sin(a)).toFixed(2)} y2={(-r * Math.cos(a)).toFixed(2)} />;
    })}
  </g>
);

const glyphs: React.ReactNode[] = [
  <Poly n={5} />, <Poly n={5} turn={0.5} />, <Poly n={6} turn={0.5} />, <Poly n={6} />, <Poly n={8} turn={0.5} />, <Poly n={10} />,
  ...[0.8, 1.2, 1.8, 2.4, 3, 4, 5.5].map((w) => <Spokes n={4} w={w} />),
  ...[0.8, 1.5, 2, 2.5, 3.2, 4.5, 6].map((w) => <Spokes n={4} w={w} turn={0.5} r={7.5} />),
  ...[0.8, 1.2, 2, 2.6, 3.5, 4.5].map((w) => <Spokes n={5} w={w} />),
  ...[0.8, 1.2, 2, 2.6, 3.4, 4.5].map((w) => <Spokes n={6} w={w} />),
  ...[0.8, 1.4, 2, 2.6, 3.4].map((w) => <Spokes n={8} w={w} />),
  <Star n={3} inner={1} />, <Star n={3} inner={2.5} />, <Star n={4} inner={1.6} />, <Star n={4} inner={3.4} />,
  <Star n={5} inner={2} />, <Star n={5} inner={4} />, <Star n={6} inner={2} />, <Star n={6} inner={4.4} />,
  <Star n={8} inner={2.8} />, <Star n={8} inner={6.4} />, <><Spokes n={12} w={0.7} /><circle r="4" /></>,
  <Star n={12} inner={5} />, <Star n={3} inner={1.8} open />, <Star n={4} inner={2.2} open />, <Star n={5} inner={3} open />, <Star n={6} inner={3} open />,
  <><circle r="7" fill="#ccc" stroke="currentColor" strokeDasharray="2 1" /><Spokes n={12} w={0.8} r={7} /></>,
  <Star n={4} inner={3.8} />,
  <path d="M-6-6Q0-3 6-6Q3 0 6 6Q0 3-6 6Q-3 0-6-6z" />,
  <><Spokes n={4} w={1} turn={0.5} r={9} /><circle cy="-5" r="1" /><circle cy="5" r="1" /><circle cx="-5" r="1" /><circle cx="5" r="1" /></>,
  <>
    <g transform="translate(0 -4)"><Spokes n={6} w={1} r={3.5} /></g>
    <g transform="translate(-4 4)"><Spokes n={6} w={1} r={3.5} /></g>
    <g transform="translate(4 4)"><Spokes n={6} w={1} r={3.5} /></g>
  </>,
  ...Array.from({ length: 6 }, () => <rect x="-3.5" y="-7.5" width="8" height="14" fill="none" stroke="currentColor" />),
];

const recent = ['€', '£', '¥', '©', '®', '™', '±', '≠', '≤', '≥', '÷', '×', '∞', 'µ', 'α', 'β'];

const DropArrow = () => (
  <span className="pointer-events-none absolute inset-y-px right-px flex w-[14px] items-center justify-center border border-[#777] bg-linear-to-b from-[#f3f3f3] to-[#cfcfcf]">
    <svg width="7" height="4" viewBox="0 0 7 4"><path d="M0 0h7L3.500 4z" fill="#000" /></svg>
  </span>
);

const SymbolDialog = () => (
  <div
    role="dialog"
    aria-label="Symbol"
    className={`absolute top-[172px] left-[176px] w-[491px] rounded-t-[6px] border border-[#3b4657] bg-linear-to-b from-[#a3b3c8] via-[#c2d2e6] via-10% to-[#bccfe6] px-[6px] pb-[6px] text-[10px] text-[#1c1c1c] shadow-[0_0_2px_#555] ${dialogFont}`}
  >
    <div className="flex h-[26px] items-center justify-between pr-[2px] pl-[3px]">
      <h2 className={`pt-[6px] text-[11px] ${uiFont}`}>Symbol</h2>
      <div className="flex gap-[3px] pt-[6px]">
        <button aria-label="Help" className="flex h-[14px] w-[27px] items-center justify-center rounded-[2px] border border-[#5c6b80] bg-linear-to-b from-[#d3ddea] to-[#a6b6ca] text-[10px] font-bold text-[#444]">?</button>
        <button aria-label="Close" className="flex h-[14px] w-[27px] items-center justify-center rounded-[2px] border border-[#5a2520] bg-linear-to-b from-[#d88a7e] via-[#b8402f] to-[#c4604f]">
          <svg width="10" height="9" viewBox="0 0 10 9"><path d="M1.500 1.500l7 6M8.500 1.500l-7 6" stroke="#444" strokeWidth="3.500" /><path d="M1.500 1.500l7 6M8.500 1.500l-7 6" stroke="#fff" strokeWidth="2" /></svg>
        </button>
      </div>
    </div>

    <div className="relative bg-[#f0f0f0] pt-[7px] pr-[7px] pb-[8px] pl-[6px]">
      <div className="-mb-px flex items-end">
        <button className="relative z-10 h-[19px] w-[52px] border border-b-0 border-[#8a8a8a] bg-white"><u>S</u>ymbols</button>
        <button className="-ml-px h-[17px] w-[94px] border border-[#8a8a8a] bg-linear-to-b from-[#f1f1f1] to-[#d6d6d6]">S<u>p</u>ecial Characters</button>
      </div>

      <div className="border border-[#8a8a8a] bg-white pt-[10px] pr-[7px] pb-[6px] pl-[6px]">
        <div className="flex items-center gap-[3px]">
          <label htmlFor="font"><u>F</u>ont:</label>
          <div className="relative h-[17px] w-[174px]">
            <select id="font" className="h-full w-full appearance-none border border-[#8a8a8a] bg-white px-px outline-none">
              <option>Wingdings 2</option>
            </select>
            <DropArrow />
          </div>
        </div>

        <div className="mt-[4px] ml-px flex">
          <div className="grid flex-1 grid-cols-16 border-t border-b-2 border-l-2 border-[#8a8a8a]">
            {glyphs.map((g, i) => (
              <button
                key={i}
                aria-label={`Symbol ${192 + i}`}
                className={`flex items-center justify-center border-black ${i < 48 ? 'border-b' : ''} ${i % 16 < 15 ? 'border-r' : ''} ${i === 0 ? 'bg-[#3390f0] text-white' : 'bg-white text-black'} ${i >= 16 && i < 48 ? 'h-[29px]' : 'h-[28px]'}`}
              >
                <svg width="19" height="19" viewBox="-10 -10 20 20" fill="currentColor">{g}</svg>
              </button>
            ))}
          </div>
          <div className="flex w-[14px] flex-col bg-[#f0f0f0]">
            <button aria-label="Scroll up" className="h-[15px] border border-[#999] bg-[#dcdcdc]" />
            <div className="mt-px h-[13px] border border-[#3d7ea5] bg-linear-to-r from-[#e3f4fc] to-[#7cc5ea]" />
            <div className="flex-1" />
            <button aria-label="Scroll down" className="flex h-[14px] items-center justify-center border border-[#999] bg-[#dcdcdc]">
              <svg width="6" height="3" viewBox="0 0 6 3"><path d="M0 0h6L3 3z" fill="#444" /></svg>
            </button>
          </div>
        </div>

        <div className="mt-[11px] leading-[14px]"><u>R</u>ecently used symbols:</div>
        <div className={`mt-[2px] mr-[13px] ml-px grid h-[31px] grid-cols-16 border border-[#8a8a8a] text-black ${uiFont}`}>
          {recent.map((s, i) => (
            <button
              key={s}
              className={`border-black leading-none ${i < 15 ? 'border-r' : ''} ${s === '®' ? 'pb-[6px] text-[12px]' : 'text-[18px]'}`}
            >
              {s}
            </button>
          ))}
        </div>

        <div className="mt-[8px] flex h-[19px] items-center">
          <span className="flex-1">Wingdings 2: 192</span>
          <label htmlFor="code"><u>C</u>haracter code:</label>
          <input id="code" defaultValue="192" className="ml-[3px] h-[18px] w-[65px] border border-[#8a8a8a] px-[2px] outline-none" />
          <label htmlFor="from" className="ml-[6px]">fro<u>m</u>:</label>
          <div className="relative ml-[2px] h-[19px] w-[98px]">
            <select id="from" className="h-full w-full appearance-none border border-[#8a8a8a] bg-white pl-px outline-none">
              <option>Symbol (decimal)</option>
            </select>
            <DropArrow />
          </div>
        </div>
      </div>

      <div className="mt-[8px] flex justify-end gap-[8px]">
        <button className="h-[20px] w-[67px] rounded-[2px] border border-[#2f7d9a] bg-linear-to-b from-[#f1f5f7] to-[#cfdbe1] shadow-[inset_0_0_0_1px_#8fd0e6]"><u>I</u>nsert</button>
        <button className="h-[20px] w-[67px] rounded-[2px] border border-[#777] bg-linear-to-b from-[#f2f2f2] to-[#d2d2d2]">Cancel</button>
      </div>
      <svg width="9" height="9" viewBox="0 0 9 9" className="absolute right-0 bottom-0"><path d="M0 9l8-8M4 9l4-4" stroke="#777" /></svg>
    </div>
  </div>
);

const App: React.FC = () => (
  <div className="h-screen w-full bg-black px-16">
    <div className={`relative flex h-full flex-col overflow-hidden bg-[#dfe0e1] ${uiFont}`}>
      <TitleBar />
      <TabBar />
      <Ribbon />
      <FormulaBar />
      <Sheet />
      <SheetTabs />
      <StatusBar />
      <Taskbar />
      <SymbolDialog />

      {/* mouse pointer */}
      <svg width="12" height="19" viewBox="0 0 12 19" className="pointer-events-none absolute top-[251px] left-[630px]">
        <path d="M.500.500v14l3-3 2.500 6 2.500-1-2.500-6h4.500z" fill="#fff" stroke="#000" />
      </svg>
    </div>
  </div>
);

export default App;
